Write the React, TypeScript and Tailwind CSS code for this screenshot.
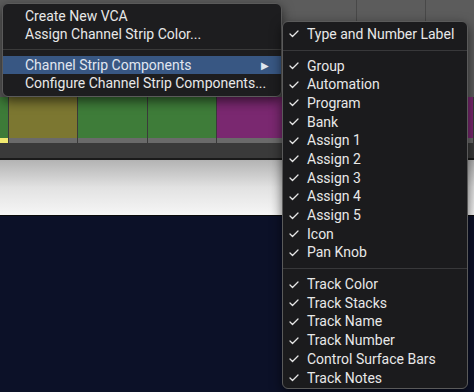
import { Check } from "lucide-react";

const strips = [
  { w: "w-[9px]", c: "bg-[#3d7b38]", b: "bg-[#f2ea70]" },
  { w: "w-[69px]", c: "bg-[#7c7731]", b: "bg-[#6a6a6a]" },
  { w: "w-[70px]", c: "bg-[#3e7c39]", b: "bg-[#6a6a6a]" },
  { w: "w-[69px]", c: "bg-[#3e7c39]", b: "bg-[#6a6a6a]" },
  { w: "w-[257px]", c: "bg-[#7a2870]", b: "bg-[#6a6a6a]" },
];

const groups = [
  ["Type and Number Label"],
  ["Group", "Automation", "Program", "Bank", "Assign 1", "Assign 2", "Assign 3", "Assign 4", "Assign 5", "Icon", "Pan Knob"],
  ["Track Color", "Track Stacks", "Track Name", "Track Number", "Control Surface Bars", "Track Notes"],
];

function MenuItem({ label }: { label: string }) {
  return (
    <div className="flex items-center h-[18.7px] pl-[5px] whitespace-nowrap">
      <Check className="w-[12px] h-[12px] text-[#e6e6e6] mr-[7px]" strokeWidth={2.6} />
      <span>{label}</span>
    </div>
  );
}

export default function App() {
  return (
    <div className="relative w-[474px] h-[392px] overflow-hidden bg-[#0c1128] text-[14px] text-[#e8e8e8] font-['Roboto',sans-serif]">
      {/* background: mixer */}
      <div className="flex flex-col">
        <div className="h-[97px] bg-[#5c5c5c] flex">
          <div className="w-[357px] border-r border-[#484848]" />
          <div className="w-[69px] border-r border-[#484848]" />
        </div>
        <div className="flex h-[46px]">
          {strips.map((s, i) => (
            <div key={i} className={`${s.w} flex flex-col border-r border-[#3a3a3a]`}>
              <div className={`flex-1 ${s.c}`} />
              <div className={`h-[5px] ${s.b}`} />
            </div>
          ))}
        </div>
        <div className="h-[15px] bg-[#3a3a3a]" />
        <div className="h-[2px] bg-[#1a1a1a]" />
        <div className="h-[55px] bg-gradient-to-b from-[#b3b3b3] via-[#e2e2e2] to-[#f6f6f6]" />
        <div className="h-[1px] bg-[#0a0a0a]" />
      </div>

      {/* main menu */}
      <div className="absolute left-[2px] top-[3px] w-[280px] rounded-[6px] bg-[#1d1d1f] border border-[#5a5a5a] pt-[3px] pb-[4px] whitespace-nowrap shadow-[0_4px_12px_rgba(0,0,0,0.6)]">
        <div className="h-[18px] flex items-center pl-[22px]">Create New VCA</div>
        <div className="h-[18px] flex items-center pl-[22px]">Assign Channel Strip Color...</div>
        <div className="h-[1px] bg-[#3a3a3a] my-[6px]" />
        <div className="h-[18px] flex items-center pl-[22px] pr-[10px] bg-[#385783] text-[#e0e6f0]">
          <span className="flex-1">Channel Strip Components</span>
          <span className="text-[10px] mr-[2px]">▶</span>
        </div>
        <div className="h-[18px] flex items-center pl-[22px]">Configure Channel Strip Components...</div>
      </div>

      {/* submenu */}
      <div className="absolute left-[282px] top-[21px] w-[186px] h-[368px] rounded-[6px] bg-[#1b1b1d] border border-[#5a5a5a] pt-[3px] shadow-[0_4px_12px_rgba(0,0,0,0.6)]">
        {groups.map((g, gi) => (
          <div key={gi}>
            {gi > 0 && <div className="h-[1px] bg-[#38383a] my-[6px]" />}
            {g.map((l) => (
              <MenuItem key={l} label={l} />
            ))}
          </div>
        ))}
      </div>
    </div>
  );
}
